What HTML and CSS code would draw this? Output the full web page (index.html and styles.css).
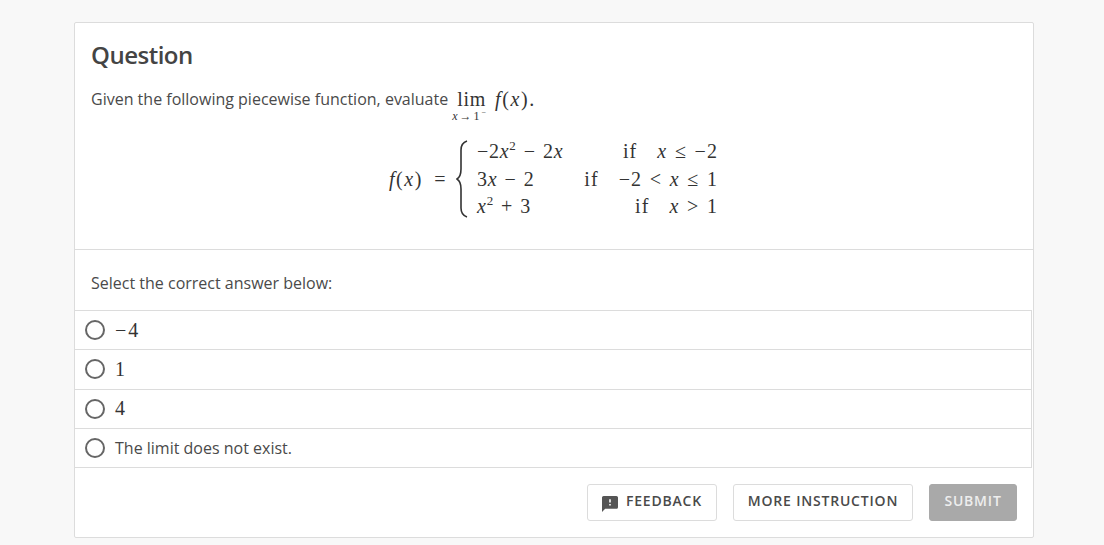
FILE: index.html
```html
<!DOCTYPE html>
<html lang="en">
<head>
<meta charset="utf-8">
<title>Question</title>
<link rel="stylesheet" href="styles.css">
</head>
<body>
<main class="card">
  <section class="question">
    <h1 class="title">Question</h1>
    <div class="prompt">
      <span>Given the following piecewise function, evaluate</span>
      <span class="math limit"><span class="lim">lim<span class="lim-sub"><i>x</i>→1<sup>−</sup></span></span><i>f</i>(<i>x</i>).</span>
    </div>
    <div class="display math">
      <span class="fname"><i>f</i>(<i>x</i>) =</span>
      <svg class="brace" width="12" height="78" viewBox="0 0 12 78" aria-hidden="true"><path d="M11 1C6.500 2.500 5 5 5 10V29C5 34 3.500 37.500 1 39C3.500 40.500 5 44 5 49V68C5 73 6.500 75.500 11 77" fill="none" stroke="#333" stroke-width="1.600"/></svg>
      <div class="cases">
        <span>−2<i>x</i><sup>2</sup> − 2<i>x</i></span><span class="cond">if<span class="gap"></span><i>x</i> ≤ −2</span>
        <span>3<i>x</i> − 2</span><span class="cond">if<span class="gap"></span>−2 &lt; <i>x</i> ≤ 1</span>
        <span><i>x</i><sup>2</sup> + 3</span><span class="cond">if<span class="gap"></span><i>x</i> &gt; 1</span>
      </div>
    </div>
  </section>
  <section class="answers">
    <p class="select">Select the correct answer below:</p>
    <ul class="options">
      <li class="option"><span class="radio"></span><span class="math opt-math">−4</span></li>
      <li class="option"><span class="radio"></span><span class="math opt-math">1</span></li>
      <li class="option"><span class="radio"></span><span class="math opt-math">4</span></li>
      <li class="option"><span class="radio"></span><span>The limit does not exist.</span></li>
    </ul>
  </section>
  <footer class="actions">
    <button class="btn feedback"><svg class="fb-icon" width="16" height="16" viewBox="2 2 20 20" aria-hidden="true"><path d="M20 2H4C2.900 2 2 2.900 2 4V22L6 18H20C21.100 18 22 17.100 22 16V4C22 2.900 21.100 2 20 2ZM13 14H11V12H13V14ZM13 10H11V6H13V10Z" fill="#555"/></svg><span class="btn-label">FEEDBACK</span></button>
    <button class="btn more"><span class="btn-label">MORE INSTRUCTION</span></button>
    <button class="btn submit"><span class="btn-label">SUBMIT</span></button>
  </footer>
</main>
</body>
</html>
```
FILE: styles.css
```css
* { box-sizing: border-box; }
html, body { margin: 0; padding: 0; }
body {
  background: #f8f8f8;
  color: #4a4a4a;
  font-family: "Open Sans", sans-serif;
  font-size: 16px;
  padding: 22px 70px 0 74px;
}
.card {
  width: 960px;
  height: 516px;
  background: #fff;
  border: 1px solid #dcdcdc;
  border-radius: 2px;
  display: flex;
  flex-direction: column;
}
.question {
  height: 227px;
  padding: 16px 16px 0;
  border-bottom: 1px solid #dcdcdc;
}
.title {
  margin: 0;
  font-size: 24px;
  line-height: 32px;
  font-weight: 600;
  letter-spacing: -0.5px;
  color: #444;
}
.prompt {
  margin-top: 16px;
  height: 32px;
  line-height: 24px;
  display: flex;
  gap: 9px;
}
.math {
  font-family: "Liberation Serif", serif;
  color: #333;
  font-size: 20px;
  letter-spacing: 0.7px;
  word-spacing: 1.5px;
}
.limit { white-space: pre; letter-spacing: 1.6px; }
.lim { position: relative; display: inline-block; margin-right: 9px; letter-spacing: 0.7px; }
.lim-sub {
  position: absolute;
  left: -5px;
  top: 24px;
  font-size: 12px;
  line-height: 10px;
  white-space: nowrap;
  letter-spacing: 2px;
}
.lim-sub sup { font-size: 8px; line-height: 0; }
.display {
  margin-top: 19px;
  margin-left: 298px;
  display: flex;
  align-items: center;
}
.fname { margin-right: 9px; letter-spacing: 1.5px; word-spacing: 5px; }
.brace { flex: none; margin-right: 9px; }
.cases {
  display: grid;
  grid-template-columns: 90px 151px;
  grid-auto-rows: 27.500px;
  line-height: 27.500px;
}
.cases sup { font-size: 13px; line-height: 0; }
.cond { text-align: right; letter-spacing: 1.1px; }
.gap { display: inline-block; width: 20px; }
.answers { display: flex; flex-direction: column; }
.select {
  margin: 0;
  height: 60px;
  padding: 22px 16px 0;
  line-height: 22px;
}
.options {
  list-style: none;
  margin: 0;
  padding: 0;
  width: 957px;
  border-right: 1px solid #dcdcdc;
  border-top: 1px solid #dcdcdc;
}
.option {
  height: 39.250px;
  display: flex;
  align-items: center;
  gap: 10px;
  padding-left: 10px;
  border-bottom: 1px solid #dcdcdc;
}
.radio {
  width: 20px;
  height: 20px;
  border: 2px solid #666;
  border-radius: 50%;
  flex: none;
}
.opt-math { letter-spacing: 2px; }
.actions {
  display: flex;
  justify-content: flex-end;
  gap: 16px;
  padding: 16px 16px 0;
}
.btn {
  height: 37px;
  padding: 0;
  background: #fff;
  border: 1px solid #dcdcdc;
  border-radius: 3px;
  font-family: "Open Sans", sans-serif;
  font-size: 14px;
  font-weight: 600;
  letter-spacing: 0.800px;
  color: #4a4a4a;
  display: flex;
  align-items: center;
  justify-content: center;
  gap: 8px;
}
.feedback { width: 130px; }
.more { width: 180px; }
.submit { width: 88px; background: #a9a9a9; border-color: #a9a9a9; color: #eee; }
.btn-label { margin-bottom: 4px; }
.fb-icon { flex: none; margin-top: 2px; }
```
